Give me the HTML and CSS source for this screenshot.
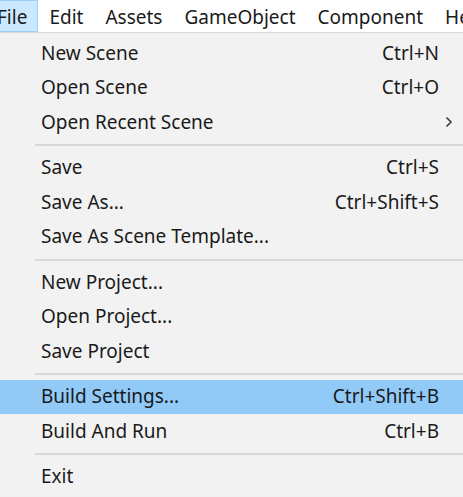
FILE: index.html
```html
<!DOCTYPE html>
<html>

<head>
    <meta charset="utf-8">
    <title>File menu</title>
    <link rel="stylesheet" href="styles.css">
</head>

<body>

    <div class="menubar">
        <div class="barItem active">File</div>
        <div class="barItem">Edit</div>
        <div class="barItem">Assets</div>
        <div class="barItem">GameObject</div>
        <div class="barItem">Component</div>
        <div class="barItem">Help</div>
    </div>

    <div class="menu">
        <div class="item"><span>New Scene</span><span class="key">Ctrl+N</span><span></span></div>
        <div class="item"><span>Open Scene</span><span class="key">Ctrl+O</span><span></span></div>
        <div class="item">
            <span>Open Recent Scene</span><span class="key"></span>
            <span class="arrow">
                <svg width="8" height="12" viewBox="0 0 8 12"><path d="M1.5 1.5 L6 6 L1.5 10.5" fill="none" stroke="#3c3c3c" stroke-width="1.6"/></svg>
            </span>
        </div>

        <div class="sep"></div>

        <div class="item"><span>Save</span><span class="key">Ctrl+S</span><span></span></div>
        <div class="item"><span>Save As...</span><span class="key">Ctrl+Shift+S</span><span></span></div>
        <div class="item"><span>Save As Scene Template...</span><span class="key"></span><span></span></div>

        <div class="sep"></div>

        <div class="item"><span>New Project...</span><span class="key"></span><span></span></div>
        <div class="item"><span>Open Project...</span><span class="key"></span><span></span></div>
        <div class="item"><span>Save Project</span><span class="key"></span><span></span></div>

        <div class="sep"></div>

        <div class="item hover"><span>Build Settings...</span><span class="key">Ctrl+Shift+B</span><span></span></div>
        <div class="item"><span>Build And Run</span><span class="key">Ctrl+B</span><span></span></div>

        <div class="sep"></div>

        <div class="item"><span>Exit</span><span class="key"></span><span></span></div>
    </div>

</body>

</html>
```

FILE: styles.css
```css
body {
    margin: 0;
    padding: 0;
    background-color: #f0f0f0;
    font-family: "Noto Sans", "Open Sans", sans-serif;
    font-size: 19px;
    color: #1a1a1a;
    overflow: hidden;
}

.menubar {
    display: flex;
    height: 32px;
    background-color: white;
    border-bottom: 1px solid #d9d9d9;
    margin-left: -14px;
    white-space: nowrap;
}

.barItem {
    display: flex;
    align-items: center;
    padding: 2px 10px 0 10px;
    border: 1px solid transparent;
    line-height: 1;
}

.barItem.active {
    background-color: #cce8ff;
    border-color: #99d1ff;
}

.menu {
    background-color: #f2f2f2;
    padding-top: 3px;
}

.item {
    display: grid;
    grid-template-columns: 1fr auto 24px;
    align-items: center;
    height: 34.5px;
    padding-left: 41px;
    line-height: 1;
}

.item.hover {
    background-color: #91c9f7;
}

.arrow {
    display: flex;
    justify-content: center;
    padding-right: 5px;
}

.sep {
    height: 11px;
    display: flex;
    align-items: center;
    margin-left: 35px;
}

.sep::after {
    content: "";
    flex: 1;
    height: 2px;
    background-color: #d7d7d7;
}
```
